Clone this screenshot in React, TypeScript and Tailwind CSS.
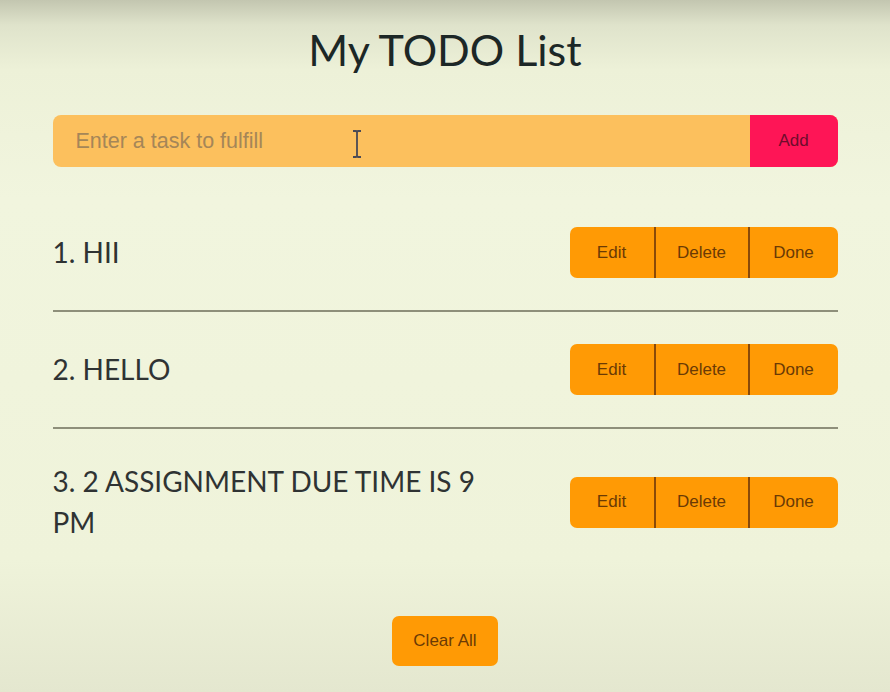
import { useState } from 'react';

type Todo = { id: number; text: string };

const INITIAL: Todo[] = [
  { id: 1, text: 'HII' },
  { id: 2, text: 'HELLO' },
  { id: 3, text: '2 ASSIGNMENT DUE TIME IS 9 PM' },
];

const btn =
  'flex items-center justify-center text-[17px] text-[#6b3a05] [font-family:"Liberation_Sans",Arial,sans-serif]';

export default function App() {
  const [todos, setTodos] = useState<Todo[]>(INITIAL);
  const [task, setTask] = useState('');

  function add() {
    if (!task.trim()) return;
    setTodos((t) => [...t, { id: Date.now(), text: task.trim().toUpperCase() }]);
    setTask('');
  }

  return (
    <div className='relative min-h-[692px] w-full bg-[linear-gradient(180deg,#c3c6b0_0px,#dfe3cb_25px,#edf1d8_70px,#f1f5de_200px,#eff3da_560px,#e4e7cf_692px)] [font-family:Lato,"Open_Sans",sans-serif]'>
      <div className="mx-auto flex w-[785px] flex-col">
        <h1 className="mt-[24px] text-center text-[43px] font-normal leading-[52px] text-[#1c2726]">
          My TODO List
        </h1>

        <div className="relative mt-[39px] flex h-[52px] overflow-hidden rounded-[8px] bg-[#fcc05d]">
          <input
            value={task}
            onChange={(e) => setTask(e.target.value)}
            placeholder="Enter a task to fulfill"
            className='flex-1 bg-transparent pl-[23px] text-[21.5px] text-[#5a4020] outline-none placeholder:text-[#a58658] [font-family:"Liberation_Sans",Arial,sans-serif]'
          />
          <button
            onClick={add}
            className='w-[88px] bg-[#fe1556] text-[17px] text-[#6e0c2c] [font-family:"Liberation_Sans",Arial,sans-serif]'
          >
            Add
          </button>
          {/* text cursor captured in the screenshot */}
          <svg
            className="pointer-events-none absolute left-[298px] top-[14px]"
            width="12"
            height="30"
            viewBox="0 0 12 30"
          >
            <path
              d="M2 2h3l1 1 1-1h3M6 3v24M2 28h3l1-1 1 1h3"
              fill="none"
              stroke="#4a4a55"
              strokeWidth="1.8"
            />
          </svg>
        </div>

        <ul className="mt-[28px]">
          {todos.map((t, i) => (
            <li
              key={t.id}
              className={`flex items-center justify-between py-[32px] ${
                i < todos.length - 1 ? 'border-b-2 border-[#8e8f7a]' : ''
              }`}
            >
              <span className="max-w-[450px] text-[28px] leading-[41px] text-[#2f3333]">
                {`${i + 1}. ${t.text}`}
              </span>
              <div className="flex h-[51px] overflow-hidden rounded-[7px] bg-[#ff9a05]">
                <button className={`${btn} h-full w-[86px] border-r-2 border-[#8a4a08]`}>Edit</button>
                <button className={`${btn} h-full w-[94px] border-r-2 border-[#8a4a08]`}>Delete</button>
                <button className={`${btn} h-full w-[88px]`}>Done</button>
              </div>
            </li>
          ))}
        </ul>

        <div className="mt-[41px] flex justify-center">
          <button
            onClick={() => setTodos([])}
            className={`${btn} h-[50px] w-[106px] rounded-[7px] bg-[#ff9a05]`}
          >
            Clear All
          </button>
        </div>
      </div>
    </div>
  );
}
